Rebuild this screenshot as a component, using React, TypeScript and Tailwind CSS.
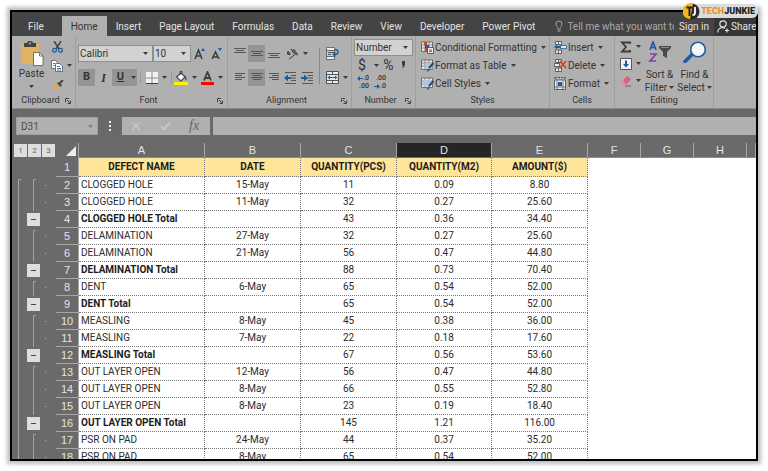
import React from "react";
import { Lightbulb } from "lucide-react";

const INK = "#3c3c3c";
const BLUE = "#1f5c9e";

function Caret() {
  return (
    <svg width="5" height="3" viewBox="0 0 5 3" className="shrink-0" aria-hidden="true">
      <path d="M0 0h5L2.5 3z" fill={INK} />
    </svg>
  );
}

function Launcher() {
  return (
    <svg width="6" height="6" viewBox="0 0 6 6" fill="none" stroke="#444" aria-hidden="true">
      <path d="M0.5 4V0.5H4M2 2l3 3M5.5 2.5v3h-3" />
    </svg>
  );
}

type GroupProps = { label: string; width: string; launcher?: boolean; children: React.ReactNode };

function Group({ label, width, launcher, children }: GroupProps) {
  return (
    <section aria-label={label} className={`flex shrink-0 flex-col border-r border-[#9d9d9d] ${width}`}>
      <div className="flex h-[57px] items-start">{children}</div>
      <div className="flex h-[15px] items-center px-1 text-[9px] text-[#333]">
        <span className="flex-1 text-center">{label}</span>
        {launcher && (
          <button aria-label={`${label} settings`}>
            <Launcher />
          </button>
        )}
      </div>
    </section>
  );
}

type IconButtonProps = { label: string; active?: boolean; width?: string; children: React.ReactNode };

function IconButton({ label, active, width = "w-[17px]", children }: IconButtonProps) {
  return (
    <button
      aria-label={label}
      className={`flex h-[17px] shrink-0 items-center justify-center gap-1 ${width} ${active ? "bg-[#949494]" : ""}`}
    >
      {children}
    </button>
  );
}

function Picker({ label, value, width }: { label: string; value: string; width: string }) {
  return (
    <div className={`relative h-[17px] shrink-0 border border-[#8f8f8f] bg-[#d2d2d2] ${width}`}>
      <select aria-label={label} className="h-full w-full appearance-none bg-transparent pl-px text-[10px] leading-[15px] text-[#333]">
        <option>{value}</option>
      </select>
      <span className="pointer-events-none absolute inset-y-0 right-1 flex items-center">
        <Caret />
      </span>
    </div>
  );
}

function Lines({ rows, y }: { rows: [number, number][]; y: number }) {
  return (
    <svg width="12" height="13" viewBox="0 0 12 13" stroke="#555" aria-hidden="true">
      {rows.map(([a, b], i) => (
        <path key={i} d={`M${a} ${y + i * 2 + 0.5}H${b}`} />
      ))}
    </svg>
  );
}

function Indent({ flip }: { flip?: boolean }) {
  return (
    <svg width="13" height="12" viewBox="0 0 13 12" aria-hidden="true">
      <path d="M1 .5h11M7 3.5h5M7 6h5M7 8.5h5M1 11.5h11" stroke="#555" />
      <path d={flip ? "M0 5h3V2.5L7 6 3 9.5V7H0z" : "M7 5H4V2.5L0 6l4 3.5V7h3z"} fill={BLUE} />
    </svg>
  );
}

function SmallArrow({ right }: { right?: boolean }) {
  return (
    <svg width="6" height="5" viewBox="0 0 6 5" aria-hidden="true">
      <path d={right ? "M0 2h3V0l3 2.500L3 5V3H0z" : "M6 2H3V0L0 2.500 3 5V3h3z"} fill={BLUE} />
    </svg>
  );
}

function PasteIcon() {
  return (
    <svg width="24" height="25" viewBox="0 0 24 25" aria-hidden="true">
      <path d="M1 3h18v20H1z" fill="#e0b264" />
      <path d="M4 2h3q0-2 3-2t3 2h3v4H4z" fill="#444" />
      <circle cx="10" cy="2.5" r="1" fill="#b0b0b0" />
      <path d="M13.5 11.5h6l3.5 3.500v9.500h-9.500z" fill="#fff" stroke="#555" strokeWidth=".8" />
      <path d="M19.500 11.500v3.500h3.500" fill="none" stroke="#555" strokeWidth=".8" />
    </svg>
  );
}

function ScissorsIcon() {
  return (
    <svg width="11" height="12" viewBox="0 0 11 12" fill="none" aria-hidden="true">
      <path d="M2 0l5 8M9 0L4 8" stroke="#444" strokeWidth="1.500" />
      <circle cx="2.500" cy="9.300" r="1.900" stroke={BLUE} strokeWidth="1.200" />
      <circle cx="8.500" cy="9.300" r="1.900" stroke={BLUE} strokeWidth="1.200" />
    </svg>
  );
}

function CopyIcon() {
  return (
    <svg width="12" height="12" viewBox="0 0 12 12" fill="#fff" stroke="#555" strokeWidth=".8" aria-hidden="true">
      <path d="M.5.5h4l2 2v6h-6z" />
      <path d="M4.500 3.500h4l3 2.500v5.500h-7z" />
      <path d="M2 3.500h2M2 5.500h2M6 6.500h3M6 8.500h4M6 10h4" stroke={BLUE} />
    </svg>
  );
}

function BrushIcon() {
  return (
    <svg width="12" height="10" viewBox="0 0 12 10" aria-hidden="true">
      <path d="M1 4l4-1 3 4-3 3-2-1z" fill="#e0a656" />
      <path d="M5 3l2-1 3 3-1.500 2z" fill="#444" />
      <path d="M8 3l3-3" stroke="#444" strokeWidth="2" />
    </svg>
  );
}

function TableIcon({ kind }: { kind: "cond" | "table" | "cell" }) {
  return (
    <svg width="13" height="13" viewBox="0 0 13 13" className="shrink-0" aria-hidden="true">
      <path d="M.5 1h11v9.500H.5z" fill="#e8e8e8" stroke="#555" strokeWidth=".8" />
      <path d="M4 1v9.500M8 1v9.500M.5 4h11M.5 7h11" stroke="#666" strokeWidth=".7" />
      {kind === "cond" && (
        <>
          <path d="M3 1h3v3H3zM4 7h3v3H4z" fill="#cf4524" />
          <path d="M4 4h4v3H4z" fill={BLUE} />
          <path d="M6.500 6.500h6v6h-6z" fill="#eee" stroke="#444" strokeWidth=".8" />
          <path d="M8 10.500h3M8 9h3" stroke="#444" strokeWidth=".8" />
        </>
      )}
      {kind !== "cond" && (
        <>
          <path d={kind === "table" ? "M4 4h7.500v6H4z" : "M2 3h8v6H2z"} fill="#a9c7e2" />
          <path d="M12.500 4L8 9" stroke="#444" strokeWidth="2" />
          <path d="M4 12.500q3 0 3-3l2 1.200q-1 2.300-5 1.800z" fill={BLUE} />
        </>
      )}
    </svg>
  );
}

function CellsIcon({ kind }: { kind: "insert" | "delete" | "format" }) {
  if (kind === "format") {
    return (
      <svg width="13" height="13" viewBox="0 0 13 13" className="shrink-0" aria-hidden="true">
        <path d="M1 .5h10M1 0v2M11 0v2" stroke={BLUE} strokeDasharray="2 1" />
        <path d="M.5 3h11v9.500H.5z" fill="#eee" stroke="#444" strokeWidth=".8" />
        <path d="M3 3v9.500M9 3v9.500M.5 10h11" stroke="#555" strokeWidth=".8" />
        <path d="M4 5h4v4H4z" fill={BLUE} />
      </svg>
    );
  }
  return (
    <svg width="13" height="13" viewBox="0 0 13 13" className="shrink-0" aria-hidden="true">
      <path d="M1.500.5h6v3h-6zM4.500.5v3M1.500 9h6v3.500h-6zM4.500 9v3.500" fill="#eee" stroke="#444" strokeWidth=".8" />
      {kind === "insert" ? (
        <>
          <path d="M6.500 4.500h6v3h-6z" fill="#dce8f3" stroke={BLUE} strokeWidth=".8" />
          <path d="M0 6l3-2.500V5h4v2H3v1.500z" fill={BLUE} />
        </>
      ) : (
        <>
          <path d="M.5 4.500h5v3h-5z" fill="#eee" stroke="#444" strokeWidth=".8" />
          <path d="M6 2l6 7M12 2L6 9" stroke="#d2451e" strokeWidth="1.700" />
        </>
      )}
    </svg>
  );
}

function RowCommand({ icon, label }: { icon: React.ReactNode; label: string }) {
  return (
    <button className="flex h-[18px] items-center gap-px whitespace-nowrap">
      {icon}
      <span className="mr-[3px]">{label}</span>
      <Caret />
    </button>
  );
}

function Ribbon() {
  return (
    <div className="flex shrink-0 overflow-hidden border-b border-[#8a8a8a] bg-[#b0b0b0] text-[10px] text-[#333]">
      <Group label="Clipboard" width="w-[64px]" launcher>
        <button className="flex w-[37px] flex-col items-center pt-[5px] pl-[2px]">
          <PasteIcon />
          <span className="mb-[3px] leading-[16px]">Paste</span>
          <Caret />
        </button>
        <div className="flex flex-col items-start gap-[2px] pt-[2px]">
          <IconButton label="Cut">
            <ScissorsIcon />
          </IconButton>
          <IconButton label="Copy" width="w-[25px]">
            <CopyIcon />
            <Caret />
          </IconButton>
          <IconButton label="Format Painter">
            <BrushIcon />
          </IconButton>
        </div>
      </Group>

      <Group label="Font" width="w-[152px]" launcher>
        <div className="flex flex-col gap-[7px] pt-[9px] pl-[2px]">
          <div className="flex items-center">
            <Picker label="Font" value="Calibri" width="w-[75px]" />
            <Picker label="Font size" value="10" width="w-[38px]" />
            {["M0 3l2-3 2 3z", "M0 0h4L2 3z"].map((d, i) => (
              <IconButton key={d} label={i ? "Decrease font size" : "Increase font size"}>
                <svg width="12" height="12" viewBox="0 0 12 12" aria-hidden="true">
                  <path d={i ? "M1 11L4.500 4 8 11M2.500 9h4" : "M1 11L4.500 2 8 11M2.500 8h4"} fill="none" stroke={INK} strokeWidth="1.500" />
                  <path d={d} transform="translate(7 0)" fill={BLUE} />
                </svg>
              </IconButton>
            ))}
          </div>
          <div className="flex items-center">
            <IconButton label="Bold" active>
              <b className="text-[11px]">B</b>
            </IconButton>
            <IconButton label="Italic">
              <i className="font-['Liberation_Serif',serif] text-[12px] font-bold">I</i>
            </IconButton>
            <IconButton label="Underline" active>
              <b className="text-[11px] underline">U</b>
            </IconButton>
            <IconButton label="Underline styles" active width="w-2">
              <Caret />
            </IconButton>
            <div className="ml-[3px] h-3 w-px bg-[#999]" />
            <IconButton label="Borders" width="w-[30px]">
              <svg width="12" height="12" viewBox="0 0 12 12" aria-hidden="true">
                <path d="M0 0h12v12H0z" fill="#f4f4f4" />
                <path d="M6 0v12M0 6h12" stroke="#888" />
                <path d="M0 11.500h12" stroke="#444" />
              </svg>
              <Caret />
            </IconButton>
            <div className="h-3 w-px bg-[#999]" />
            <IconButton label="Fill color" width="w-[27px]">
              <svg width="14" height="14" viewBox="0 0 14 14" aria-hidden="true">
                <path d="M2.500 6L7 2l4 4-4 4z" fill="#fff" stroke="#444" strokeWidth="1.100" />
                <path d="M6 4V.5h2V3" fill="none" stroke="#444" />
                <path d="M10 4q3 1 2.500 5-2 0-2-3z" fill={BLUE} />
                <path d="M0 11h14v3H0z" fill="#fff200" />
              </svg>
              <Caret />
            </IconButton>
            <IconButton label="Font color" width="w-[25px]">
              <svg width="13" height="14" viewBox="0 0 13 14" aria-hidden="true">
                <path d="M3 9.500L6.500 1 10 9.500M4.500 7h4" fill="none" stroke={INK} strokeWidth="1.800" />
                <path d="M0 11h13v3H0z" fill="#f00" />
              </svg>
              <Caret />
            </IconButton>
          </div>
        </div>
      </Group>

      <Group label="Alignment" width="w-[124px]" launcher>
        <div className="flex w-[91px] flex-col gap-[7px] pt-[9px] pl-[3px]">
          <div className="flex">
            <IconButton label="Top align"><Lines y={1} rows={[[0, 12], [2, 10], [0, 12]]} /></IconButton>
            <IconButton label="Middle align" active><Lines y={4} rows={[[0, 12], [2, 10], [0, 12]]} /></IconButton>
            <IconButton label="Bottom align"><Lines y={6} rows={[[0, 12], [2, 10], [0, 12]]} /></IconButton>
            <IconButton label="Orientation" width="w-[29px]">
              <svg width="13" height="12" viewBox="0 0 13 12" fill="none" stroke={INK} aria-hidden="true">
                <path d="M2.500 3.500a1.500 1.500 0 1 0 1.500 2.500L2 3.500M5 1l3 4a1.500 1.500 0 1 0-1-3" strokeWidth="1.200" />
                <path d="M3 11l8-6M8.500 5H11v2.500" />
              </svg>
              <Caret />
            </IconButton>
          </div>
          <div className="flex">
            <IconButton label="Align left"><Lines y={2} rows={[[1, 11], [1, 8], [1, 11], [1, 8]]} /></IconButton>
            <IconButton label="Center" active><Lines y={2} rows={[[0, 12], [2, 10], [0, 12], [2, 10]]} /></IconButton>
            <IconButton label="Align right"><Lines y={2} rows={[[1, 11], [4, 11], [1, 11], [4, 11]]} /></IconButton>
            <IconButton label="Decrease indent"><Indent /></IconButton>
            <IconButton label="Increase indent"><Indent flip /></IconButton>
          </div>
        </div>
        <div className="mt-3 h-9 w-px bg-[#888]" />
        <div className="flex flex-col gap-[7px] pt-[9px] pl-[4px]">
          <IconButton label="Wrap text">
            <svg width="13" height="13" viewBox="0 0 13 13" aria-hidden="true">
              <path d="M.5.5h8v3h-8zM.5 9.500h8v3h-8z" fill="#eee" stroke="#555" strokeWidth=".8" />
              <path d="M.5 3.500h8v6h-8z" fill="#b9d2e8" stroke="#555" strokeWidth=".8" />
              <path d="M2 5.500h7M2 7.500h3" stroke="#555" />
              <path d="M9 2.500q3 0 3 2.500t-3 2.500" fill="none" stroke={BLUE} strokeWidth="1.300" />
              <path d="M9.500 5v5L6 7.500z" fill={BLUE} />
            </svg>
          </IconButton>
          <IconButton label="Merge and center" width="w-[25px]">
            <svg width="13" height="13" viewBox="0 0 13 13" aria-hidden="true">
              <path d="M.5.5h12v12H.5zM6.500.5v12" fill="#eee" stroke="#444" strokeWidth=".9" />
              <path d="M.5 3.500h12v6H.5z" fill="#dce8f3" stroke="#444" strokeWidth=".9" />
              <path d="M1.500 6.500L4 4.500V6h5V4.500l2.500 2L9 8.500V7H4v1.500z" fill={BLUE} />
            </svg>
            <Caret />
          </IconButton>
        </div>
      </Group>

      <Group label="Number" width="w-[64px]" launcher>
        <div className="flex flex-col pt-[3px] pl-[2px]">
          <Picker label="Number format" value="Number" width="w-[59px]" />
          <div className="flex h-[18px] items-center text-[14px]">
            <button aria-label="Accounting format" className="flex w-[26px] items-center gap-2 pl-1">
              $<Caret />
            </button>
            <button className="w-[17px]">%</button>
            <button aria-label="Comma style" className="flex w-[12px] justify-center">
              <svg width="5" height="8" viewBox="0 0 5 8" aria-hidden="true">
                <path d="M1 0h3v3Q4 6 1 7q1-2 1-3H1z" fill={INK} />
              </svg>
            </button>
          </div>
          <div className="flex gap-[3px] pl-[2px] text-[7px] leading-[8px] font-medium">
            <button aria-label="Increase decimal" className="flex w-[13px] flex-col items-end">
              <span className="flex items-center"><SmallArrow />.0</span>
              <span>.00</span>
            </button>
            <button aria-label="Decrease decimal" className="flex w-[14px] flex-col items-end">
              <span>.00</span>
              <span className="flex items-center"><SmallArrow right />.0</span>
            </button>
          </div>
        </div>
      </Group>

      <Group label="Styles" width="w-[134px]">
        <div className="flex flex-col pt-[2px] pl-[5px]">
          <RowCommand icon={<TableIcon kind="cond" />} label="Conditional Formatting" />
          <RowCommand icon={<TableIcon kind="table" />} label="Format as Table" />
          <RowCommand icon={<TableIcon kind="cell" />} label="Cell Styles" />
        </div>
      </Group>

      <Group label="Cells" width="w-[65px]">
        <div className="flex flex-col pt-[2px] pl-[4px]">
          <RowCommand icon={<CellsIcon kind="insert" />} label="Insert" />
          <RowCommand icon={<CellsIcon kind="delete" />} label="Delete" />
          <RowCommand icon={<CellsIcon kind="format" />} label="Format" />
        </div>
      </Group>

      <Group label="Editing" width="w-[99px]">
        <div className="flex flex-col pt-[2px] pl-[4px]">
          <IconButton label="AutoSum" width="w-[22px]">
            <svg width="12" height="12" viewBox="0 0 12 12" aria-hidden="true">
              <path d="M10 3V1.500H2L6 6l-4 4.500h8V9" fill="none" stroke={INK} strokeWidth="1.800" />
            </svg>
            <Caret />
          </IconButton>
          <IconButton label="Fill" width="w-[22px]">
            <svg width="12" height="12" viewBox="0 0 12 12" aria-hidden="true">
              <path d="M.5.5h11v11H.5z" fill="#f2f2f2" stroke="#555" />
              <path d="M5 2.500h2V6h2L6 9.500 3 6h2z" fill={BLUE} />
            </svg>
            <Caret />
          </IconButton>
          <IconButton label="Clear" width="w-[22px]">
            <svg width="12" height="12" viewBox="0 0 12 12" aria-hidden="true">
              <path d="M7 1l4 3-5 6H3L.5 7.500z" fill="#e0607a" />
              <path d="M.5 7.500L3 10h3L3 5z" fill="#f0909f" />
              <path d="M5 11h6" stroke="#555" strokeWidth=".8" />
            </svg>
            <Caret />
          </IconButton>
        </div>
        <button className="flex w-[37px] flex-col items-center whitespace-nowrap pt-[5px] leading-[13px]">
          <svg width="24" height="22" viewBox="0 0 24 22" aria-hidden="true">
            <path d="M2 9l3-8 3 8M3 6.500h4" fill="none" stroke={BLUE} strokeWidth="1.700" />
            <path d="M2 13h6l-6 7h6" fill="none" stroke="#8540a8" strokeWidth="1.700" />
            <path d="M11 5h12v2l-4 4v6l-4-2v-4l-4-4z" fill="#4a4a4a" />
            <path d="M13 6.500h8" stroke="#999" strokeWidth=".8" />
          </svg>
          <span className="mt-[5px]">Sort &amp;</span>
          <span className="flex items-center gap-[2px]">Filter <Caret /></span>
        </button>
        <button className="flex w-[33px] flex-col items-center whitespace-nowrap pt-[5px] leading-[13px]">
          <svg width="24" height="22" viewBox="0 0 24 22" aria-hidden="true">
            <path d="M9.500 13L2 20.500" stroke={BLUE} strokeWidth="3.500" strokeLinecap="round" />
            <circle cx="15" cy="8.500" r="7.300" fill="#f4f7fa" stroke={BLUE} strokeWidth="1.600" />
          </svg>
          <span className="mt-[5px]">Find &amp;</span>
          <span className="flex items-center gap-[2px]">Select <Caret /></span>
        </button>
      </Group>
    </div>
  );
}

const TABS = ["File", "Home", "Insert", "Page Layout", "Formulas", "Data", "Review", "View", "Developer", "Power Pivot"];

function TabBar() {
  return (
    <nav className="flex h-6 shrink-0 items-end overflow-hidden bg-[#444] pl-[7px] text-[10px] text-[#e2e2e2]">
      {TABS.map((tab) => (
        <button
          key={tab}
          className={`h-5 shrink-0 whitespace-nowrap px-[9px] ${tab === "Home" ? "bg-[#b0b0b0] text-[#333]" : ""} ${tab === "File" ? "mr-[9px]" : ""}`}
        >
          {tab}
        </button>
      ))}
      <label className="flex h-5 min-w-0 flex-1 items-center gap-[2px] pl-[9px] text-[#aaa]">
        <Lightbulb size={12} className="shrink-0" aria-hidden="true" />
        <input
          aria-label="Tell me what you want to do"
          placeholder="Tell me what you want to do"
          className="w-full min-w-0 bg-transparent placeholder:text-[#aaa]"
        />
      </label>
      <button className="h-5 w-[40px] shrink-0 whitespace-nowrap">Sign in</button>
      <button className="flex h-5 w-[42px] shrink-0 items-center gap-px bg-[#363636] pl-[3px]">
        <svg width="13" height="13" viewBox="0 0 13 13" fill="none" stroke="#e2e2e2" strokeWidth="1.200" className="shrink-0" aria-hidden="true">
          <circle cx="6" cy="4" r="3.200" />
          <path d="M.7 12.500Q1 8 5 7.500q2 0 3 1M10 8.500v4M8 10.500h4" />
        </svg>
        Share
      </button>
    </nav>
  );
}

function FormulaBar() {
  return (
    <div className="flex h-[34px] shrink-0 items-start bg-[#696969] pt-2 pl-1 text-[10px] text-[#4c4c4c]">
      <label className="flex h-[18px] w-[82px] shrink-0 items-center border border-[#a0a0a0] bg-[#b0b0b0] pr-1">
        <input aria-label="Name box" defaultValue="D31" className="w-full min-w-0 bg-transparent pl-1" />
        <svg width="5" height="3" viewBox="0 0 5 3" className="shrink-0" aria-hidden="true">
          <path d="M0 0h5L2.500 3z" fill="#808080" />
        </svg>
      </label>
      <svg width="24" height="18" viewBox="0 0 24 18" fill="#eee" className="shrink-0" aria-hidden="true">
        <path d="M11 4h2v2h-2zM11 8h2v2h-2zM11 12h2v2h-2z" />
      </svg>
      <div className="mr-[3px] flex h-[18px] w-[88px] shrink-0 items-center bg-[#b0b0b0] pl-[9px]">
        <button aria-label="Cancel" className="w-[29px]">
          <svg width="10" height="10" viewBox="0 0 10 10" stroke="#c6c6c6" strokeWidth="1.500" aria-hidden="true">
            <path d="M1 1l8 8M9 1L1 9" />
          </svg>
        </button>
        <button aria-label="Enter" className="w-[29px]">
          <svg width="11" height="10" viewBox="0 0 11 10" fill="none" stroke="#c6c6c6" strokeWidth="2" aria-hidden="true">
            <path d="M1 5l3 3 6-6" />
          </svg>
        </button>
        <button className="font-['Liberation_Serif',serif] text-[14px] leading-[18px] text-[#666] italic">fx</button>
      </div>
      <input aria-label="Formula" className="h-[18px] min-w-0 flex-1 bg-[#b0b0b0] px-1" />
    </div>
  );
}

const COLUMNS = ["A", "B", "C", "D", "E", "F", "G", "H", ""];
const WIDTHS = ["w-[15px]", "w-[13px]", "w-[16px]", "w-[23px]", "w-[126px]", "w-[96px]", "w-[96px]", "w-[95px]", "w-[96px]", "w-[53px]", "w-[53px]", "w-[53px]", ""];

const ROWS: string[][] = [
  ["CLOGGED HOLE", "15-May", "11", "0.09", "8.80"],
  ["CLOGGED HOLE", "11-May", "32", "0.27", "25.60"],
  ["CLOGGED HOLE Total", "", "43", "0.36", "34.40"],
  ["DELAMINATION", "27-May", "32", "0.27", "25.60"],
  ["DELAMINATION", "21-May", "56", "0.47", "44.80"],
  ["DELAMINATION Total", "", "88", "0.73", "70.40"],
  ["DENT", "6-May", "65", "0.54", "52.00"],
  ["DENT Total", "", "65", "0.54", "52.00"],
  ["MEASLING", "8-May", "45", "0.38", "36.00"],
  ["MEASLING", "7-May", "22", "0.18", "17.60"],
  ["MEASLING Total", "", "67", "0.56", "53.60"],
  ["OUT LAYER OPEN", "12-May", "56", "0.47", "44.80"],
  ["OUT LAYER OPEN", "8-May", "66", "0.55", "52.80"],
  ["OUT LAYER OPEN", "8-May", "23", "0.19", "18.40"],
  ["OUT LAYER OPEN Total", "", "145", "1.21", "116.00"],
  ["PSR ON PAD", "24-May", "44", "0.37", "35.20"],
  ["PSR ON PAD", "8-May", "65", "0.54", "52.00"],
];

const HEADINGS = ["DEFECT NAME", "DATE", "QUANTITY(PCS)", "QUANTITY(M2)", "AMOUNT($)"];

const isTotal = (row?: string[]) => !row || row[0].endsWith("Total");

function Bracket({ open }: { open: boolean }) {
  return (
    <svg width="13" height="17" viewBox="0 0 13 17" fill="none" stroke="#a2a2a2" className="block" aria-hidden="true">
      <path d={open ? "M9 2.500H6.500V17" : "M6.500 0V17"} />
    </svg>
  );
}

function RowNumber({ n }: { n: number }) {
  return (
    <th scope="row" className="border-r border-b border-[#a6a6a6] bg-[#6a6a6a] p-0 text-center font-['Liberation_Sans',sans-serif] text-[11px] font-normal text-[#e4e4e4]">
      {n}
    </th>
  );
}

function Sheet() {
  return (
    <div className="min-h-0 flex-1 overflow-hidden bg-white">
      <table className="w-full table-fixed border-separate border-spacing-0 text-[10px] leading-[16px] text-[#2c2c2c]">
        <colgroup>
          {WIDTHS.map((w, i) => (
            <col key={i} className={w} />
          ))}
        </colgroup>
        <thead>
          <tr className="h-[15px] bg-[#6a6a6a]">
            <td colSpan={3} className="p-0">
              <div className="flex gap-px pl-[2px]">
                {[1, 2, 3].map((n) => (
                  <button key={n} className="h-[13px] w-[13px] bg-[#dedede] text-[8px] leading-[13px] text-[#666]">
                    {n}
                  </button>
                ))}
              </div>
            </td>
            <td className="border-r border-[#a6a6a6] p-0">
              <button aria-label="Select all" className="flex w-full justify-end pr-[2px]">
                <svg width="10" height="10" viewBox="0 0 10 10" aria-hidden="true">
                  <path d="M10 0v10H0z" fill="#ececec" />
                </svg>
              </button>
            </td>
            {COLUMNS.map((c) => (
              <th
                key={c}
                className={`border-r border-b border-r-[#a6a6a6] p-0 font-['Liberation_Sans',sans-serif] text-[11px] leading-[14px] font-normal text-[#e4e4e4] ${c === "D" ? "border-b-[#2f8f4e] bg-[#252525]" : "border-b-[#8a8a8a]"}`}
              >
                {c}
              </th>
            ))}
          </tr>
        </thead>
        <tbody>
          <tr className="h-[19px]">
            <td colSpan={3} className="bg-[#6a6a6a] p-0" />
            <RowNumber n={1} />
            {HEADINGS.map((h) => (
              <th key={h} className="border-r border-b border-dotted border-[#777] bg-[#ffe599] p-0 font-bold text-[#1c1c1c]">
                {h}
              </th>
            ))}
            <td colSpan={4} className="p-0" />
          </tr>
          {ROWS.map((row, i) => {
            const total = isTotal(row);
            return (
              <tr key={i} className="h-[17px]">
                <td className="bg-[#6a6a6a] p-0">
                  <Bracket open={i === 0} />
                </td>
                <td className="bg-[#6a6a6a] p-0">
                  {total ? (
                    <button aria-label="Collapse group" className="flex h-[13px] w-[13px] items-center justify-center bg-[#dedede]">
                      <span className="h-px w-[5px] bg-[#444]" />
                    </button>
                  ) : (
                    <Bracket open={isTotal(ROWS[i - 1])} />
                  )}
                </td>
                <td className="bg-[#6a6a6a] p-0">
                  {!total && <div className="ml-[5px] h-px w-px bg-[#b0b0b0]" />}
                </td>
                <RowNumber n={i + 2} />
                {row.map((value, c) => (
                  <td
                    key={c}
                    className={`border-r border-b border-dotted border-[#777] p-0 whitespace-nowrap ${c === 0 ? "pl-[2px]" : "text-center"} ${c === 0 && total ? "font-bold text-[#1c1c1c]" : ""}`}
                  >
                    {value}
                  </td>
                ))}
                <td colSpan={4} className="p-0" />
              </tr>
            );
          })}
        </tbody>
      </table>
    </div>
  );
}

function Logo() {
  return (
    <div className="absolute top-[3px] right-[10px] flex h-4 items-center">
      <svg width="17" height="17" viewBox="0 0 17 17" className="z-10 shrink-0" aria-hidden="true">
        <circle cx="8.500" cy="8.500" r="8" fill="#2b2b2b" />
        <path d="M10 .7A8 8 0 1 0 7 16.300z" fill="#f3b61f" />
        <path d="M3.500 4.500h6M6.500 4.500V13" stroke="#222" strokeWidth="2" />
        <path d="M12 4v6q0 2-2.500 2" fill="none" stroke="#fff" strokeWidth="1.800" />
      </svg>
      <strong className="-ml-1 rounded-r-md bg-[#dcdcdc] pr-[3px] pl-[5px] text-[9px] leading-[14px] font-black text-[#222]">
        <span className="text-[#e8961e]">TECH</span>JUNKIE
      </strong>
    </div>
  );
}

export default function App() {
  return (
    <div className="relative flex h-screen flex-col bg-white p-[10px] font-[Roboto,sans-serif]">
      <main className="flex min-h-0 flex-1 flex-col overflow-hidden border-2 border-black shadow-[0_0_4px_3px_#bdbdbd]">
        <TabBar />
        <Ribbon />
        <FormulaBar />
        <Sheet />
      </main>
      <Logo />
    </div>
  );
}
